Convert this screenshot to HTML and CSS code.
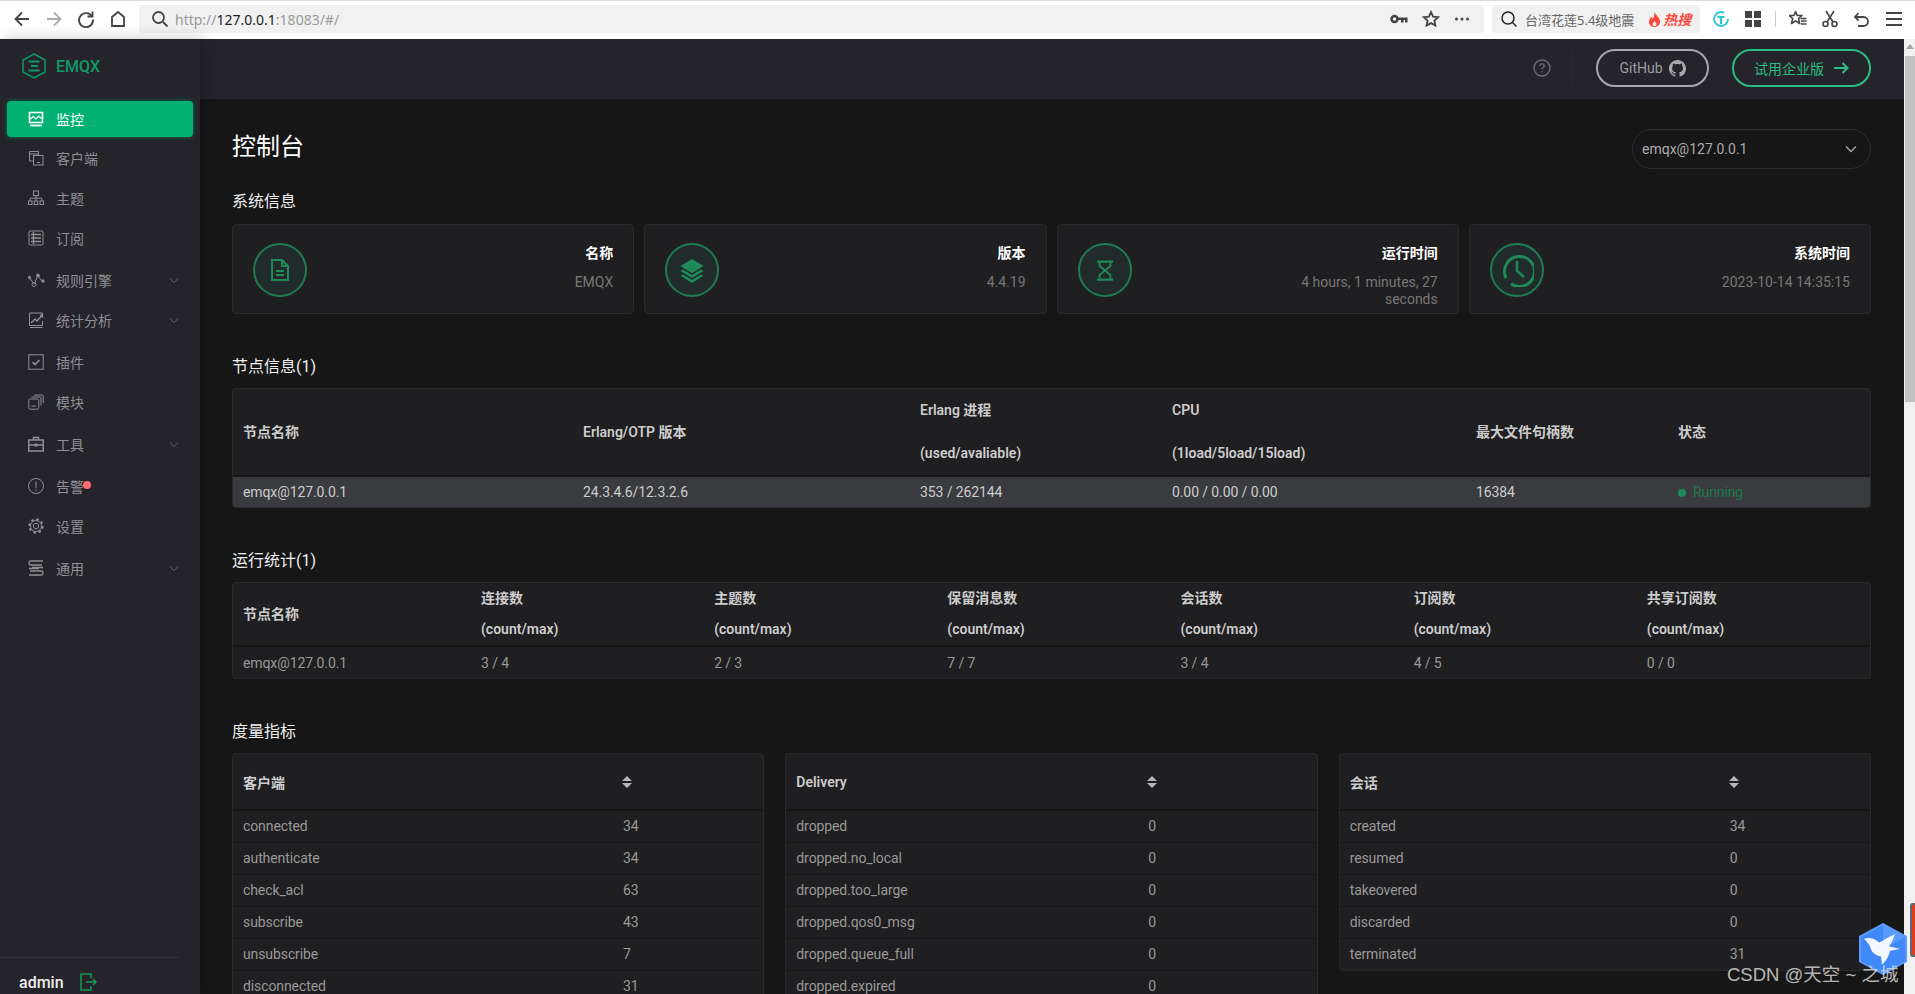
FILE: index.html
```html
<!DOCTYPE html>
<html lang="zh">
<head>
<meta charset="utf-8">
<title>EMQX Dashboard</title>
<link rel="stylesheet" href="styles.css">
</head>
<body>
<header class="browser">
  <button class="bicon"><svg width="20" height="20" viewBox="0 0 20 20" class="bs"><path d="M17 10H4M10 3.500 3.500 10l6.500 6.500"/></svg></button>
  <button class="bicon faded"><svg width="20" height="20" viewBox="0 0 20 20" class="bs"><path d="M3 10h13M10 3.500l6.500 6.500-6.500 6.500"/></svg></button>
  <button class="bicon"><svg width="20" height="20" viewBox="0 0 20 20" class="bs"><path d="M16 7.500A7 7 0 1 0 17 10.500M16.500 2.500v5h-5"/></svg></button>
  <button class="bicon"><svg width="20" height="20" viewBox="0 0 20 20" class="bs"><path d="M4 17V8l6-5 6 5v9z"/></svg></button>
  <div class="address">
    <svg width="18" height="18" viewBox="0 0 18 18" class="bs"><circle cx="7.500" cy="7.500" r="5.500"/><path d="m12 12 4.500 4.500"/></svg>
    <span class="url"><span class="url-dim">http://</span>127.0.0.1<span class="url-dim">:18083/#/</span></span>
    <span class="address-tools">
      <svg width="18" height="14" viewBox="0 0 18 14"><circle cx="4.500" cy="7" r="3" fill="none" stroke="#444" stroke-width="2.500"/><path d="M7 5.500h10.500v5H15V8h-1.500v2.500H11V8H7z" fill="#444"/></svg>
      <svg width="18" height="18" viewBox="0 0 18 18" class="bs"><path d="m9 2 2.100 4.600 5 .6-3.700 3.400 1 5L9 13.100 4.600 15.600l1-5L1.900 7.200l5-.6z"/></svg>
      <svg width="16" height="6" viewBox="0 0 16 6" fill="#444"><circle cx="2.500" cy="3" r="1.500"/><circle cx="8" cy="3" r="1.500"/><circle cx="13.500" cy="3" r="1.500"/></svg>
    </span>
  </div>
  <div class="hotsearch">
    <svg width="18" height="18" viewBox="0 0 18 18" fill="none" stroke="#222" stroke-width="1.500"><circle cx="8" cy="8" r="6"/><path d="m12.500 12.500 4 4"/></svg>
    <span class="hot-text">台湾花莲5.4级地震</span>
    <svg class="flame" width="13" height="15" viewBox="0 0 12 15"><path d="M6 0c1 3 5 5 5.500 9 .3 3-2 6-5.500 6S.2 12.500.5 9.500C.8 7 2 6 2.500 4.500 3.500 5.500 3.800 6 4 7c1.500-2 2-4 2-7zm0 9c-1 1.500-2 2.500-2 3.500S5 14 6 14s2-.5 2-1.500S7 10.500 6 9z" fill="#fb4a3e"/></svg>
    <span class="hot-tag">热搜</span>
  </div>
  <div class="exts">
    <button class="bicon"><svg width="18" height="18" viewBox="0 0 18 18"><circle cx="9" cy="9" r="7" fill="none" stroke="#26c9d2" stroke-width="1.800" stroke-dasharray="36 8"/><path d="M5.500 6h7v2H10v6H8V8H5.500z" fill="#26c9d2"/></svg></button>
    <button class="bicon"><svg width="16" height="16" viewBox="0 0 16 16" fill="#444"><rect x="0" y="0" width="7" height="7"/><rect x="9" y="0" width="7" height="7"/><rect x="0" y="9" width="7" height="7"/><rect x="9" y="9" width="7" height="7"/></svg></button>
    <span class="bdiv"></span>
    <button class="bicon"><svg width="18" height="18" viewBox="0 0 18 18" fill="none" stroke="#444" stroke-width="1.600" stroke-linejoin="round"><path d="M6.500 1.500 8.200 5.500H13L9.500 8.500l1.200 5-4.200-2.700-4 2.700 1.200-5L.5 5.500h4.300z"/><path d="M11.500 8.500h6M12 11h5.500M12 14h5.500"/></svg></button>
    <button class="bicon"><svg width="18" height="18" viewBox="0 0 18 18" fill="none" stroke="#444" stroke-width="1.600"><circle cx="4.500" cy="14" r="2.500"/><circle cx="13.500" cy="14" r="2.500"/><path d="m6 12 7-11M12 12 5 1"/></svg></button>
    <button class="bicon"><svg width="18" height="18" viewBox="0 0 18 18" fill="none" stroke="#444" stroke-width="1.800"><path d="M5 16h5.500a4.500 4.500 0 0 0 0-9H2M5.500 3 2 7l3.500 3.500"/></svg></button>
    <button class="bicon"><svg width="16" height="14" viewBox="0 0 16 14" fill="#444"><rect width="16" height="2"/><rect y="6" width="16" height="2"/><rect y="12" width="16" height="2"/></svg></button>
  </div>
</header>

<div class="app">
  <aside class="sidebar">
    <div class="logo">
      <svg width="24" height="26" viewBox="0 0 24 26" fill="none" stroke="#0f9a68" stroke-width="1.500"><path d="M12 1 23 7v12l-11 6-11-6V7z"/><path d="M6.500 8.500h11M9 13h7M6.500 17.500h11" stroke-width="2"/></svg>
      <span>EMQX</span>
    </div>
    <nav class="menu">
      <a class="item active">
        <svg class="ico" viewBox="0 0 16 16"><rect x="1.500" y="1.500" width="13" height="10" stroke="#fff" stroke-width="1.600"/><path d="M2.500 8 5 5.500l3 2.500 2.500-3 3 2.500" stroke="#fff" stroke-width="1.200"/><path d="M2 14.500h12" stroke-width="1.800"/></svg>
        <span>监控</span>
      </a>
      <a class="item"><svg class="ico" viewBox="0 0 16 16"><path d="M5 11H1.500V1.500h9V5M1.500 4h9"/><rect x="5.500" y="5.500" width="9.500" height="9.500"/><path d="M9 12.500h3"/></svg><span>客户端</span></a>
      <a class="item"><svg class="ico" viewBox="0 0 16 16"><rect x="5.500" y="1" width="5" height="4.500"/><rect x=".5" y="11" width="3.500" height="3.500"/><rect x="6.200" y="11" width="3.500" height="3.500"/><rect x="12" y="11" width="3.500" height="3.500"/><path d="M8 5.500V11M2.200 11V8.200h11.600V11"/></svg><span>主题</span></a>
      <a class="item"><svg class="ico" viewBox="0 0 16 16"><rect x="1" y="1" width="14" height="14" rx="1"/><path d="M3 4.500h10M3 8h10M3 11.500h10M5.500 2v12" stroke-width="1.400"/></svg><span>订阅</span></a>
      <a class="item gap"><svg class="ico" viewBox="0 0 16 16"><path d="M1 5.500 5.500 11l1 1 3-8.500 5 6"/><circle cx="1.500" cy="5.500" r="1.200" fill="currentColor"/><circle cx="6" cy="12.500" r="2"/><circle cx="10" cy="3.500" r="1.400" fill="currentColor"/><circle cx="15" cy="9" r="1.200" fill="currentColor"/></svg><span>规则引擎</span><svg class="chev" viewBox="0 0 12 8"><path d="m1 1.500 5 5 5-5"/></svg></a>
      <a class="item"><svg class="ico" viewBox="0 0 16 16"><path d="M14.500 6V1h-13v12.500h13V9M2 15.500h12.500"/><path d="m3 11 4-4 2 2 4.500-5" stroke-width="1.300"/><circle cx="13.500" cy="3.500" r="1" fill="currentColor"/></svg><span>统计分析</span><svg class="chev" viewBox="0 0 12 8"><path d="m1 1.500 5 5 5-5"/></svg></a>
      <a class="item gap"><svg class="ico" viewBox="0 0 16 16"><rect x=".8" y=".8" width="14.400" height="14.400"/><path d="m4.500 8 2.500 2.500 4.500-4.500" stroke-width="1.600"/></svg><span>插件</span></a>
      <a class="item"><svg class="ico" viewBox="0 0 16 16"><rect x=".8" y="5" width="10" height="10.200" rx="1.500"/><path d="M3.500 12h4.500M3.500 3h8.500a1 1 0 0 1 1 1v7.500M6 1h8a1.200 1.200 0 0 1 1.200 1.200V9"/></svg><span>模块</span></a>
      <a class="item gap"><svg class="ico" viewBox="0 0 16 16"><path d="M5.500 4V1.500h5V4M.8 4h14.400v11H.8zM1 9h14" stroke-width="1.500"/><rect x="6.500" y="7.500" width="3" height="3" fill="currentColor" stroke="none"/></svg><span>工具</span><svg class="chev" viewBox="0 0 12 8"><path d="m1 1.500 5 5 5-5"/></svg></a>
      <a class="item gap"><svg class="ico" viewBox="0 0 16 16"><circle cx="8" cy="8" r="7.500"/><path d="M8 3.500V10M8 11.500V13"/></svg><span class="badged">告警</span></a>
      <a class="item"><svg class="ico" viewBox="0 0 16 16"><circle cx="8" cy="8" r="2.700"/><circle cx="8" cy="8" r="5.500"/><circle cx="8" cy="8" r="6.700" stroke-width="2" stroke-dasharray="2.600 2.660"/></svg><span>设置</span></a>
      <a class="item gap"><svg class="ico" viewBox="0 0 16 16"><path d="M14 5H2.500a1.500 1.500 0 0 1-1.500-1.500v-1A1.500 1.500 0 0 1 2.500 1H15M2 11h11.500a1.500 1.500 0 0 1 1.500 1.500v1a1.500 1.500 0 0 1-1.500 1.500H1M4 7.500h11M1 8.500h10" stroke-width="1.300"/></svg><span>通用</span><svg class="chev" viewBox="0 0 12 8"><path d="m1 1.500 5 5 5-5"/></svg></a>
    </nav>
    <div class="side-foot">
      <span class="admin">admin</span>
      <svg width="17" height="18" viewBox="0 0 17 18" fill="none" stroke="#149a58" stroke-width="1.500"><path d="M11 5V1H1v16h10v-4M6 9h10M13 6l3 3-3 3"/></svg>
    </div>
  </aside>

  <div class="content">
    <div class="topbar">
      <svg class="help" width="18" height="18" viewBox="0 0 18 18" fill="none" stroke="#6d6d72" stroke-width="1.400"><circle cx="9" cy="9" r="8"/><path d="M6.800 7c0-1.300 1-2.100 2.200-2.100s2.200.8 2.200 2c0 1.800-2.200 1.800-2.200 3.400M9 12v1.400"/></svg>
      <span class="vline"></span>
      <a class="pill pill-gray">GitHub <svg width="17" height="17" viewBox="0 0 16 16" fill="#aaa"><path d="M8 0C3.580 0 0 3.580 0 8c0 3.540 2.290 6.530 5.470 7.590.4.070.55-.17.55-.38 0-.19-.01-.82-.01-1.490-2.010.37-2.530-.49-2.690-.94-.09-.23-.48-.94-.82-1.130-.28-.15-.68-.52-.01-.53.63-.01 1.080.58 1.230.82.720 1.210 1.870.87 2.330.66.070-.52.28-.87.51-1.070-1.780-.2-3.640-.89-3.640-3.950 0-.87.31-1.590.82-2.150-.08-.2-.36-1.020.08-2.120 0 0 .67-.21 2.200.82.64-.18 1.320-.27 2-.27.68 0 1.360.09 2 .27 1.530-1.040 2.200-.82 2.200-.82.44 1.100.16 1.920.08 2.120.51.56.82 1.270.82 2.150 0 3.070-1.870 3.750-3.650 3.950.29.25.54.73.54 1.480 0 1.070-.01 1.930-.01 2.200 0 .21.15.46.55.38A8.013 8.013 0 0016 8c0-4.420-3.580-8-8-8z"/></svg></a>
      <a class="pill pill-green">试用企业版 <svg width="15" height="12" viewBox="0 0 15 12" fill="none" stroke="#2bbd82" stroke-width="2"><path d="M0 6h13M8.500 1l5 5-5 5"/></svg></a>
    </div>

    <main class="main">
      <div class="page-head">
        <h1>控制台</h1>
        <div class="select"><span>emqx@127.0.0.1</span><svg width="12" height="8" viewBox="0 0 12 8" fill="none" stroke="#aaa" stroke-width="1.300"><path d="m1 1.500 5 5 5-5"/></svg></div>
      </div>

      <h2 class="first">系统信息</h2>
      <div class="cards">
        <div class="card">
          <span class="round"><svg width="24" height="24" viewBox="0 0 24 24" fill="none" stroke="#1e8a58" stroke-width="2"><path d="M4 2h10l6 6v14H4zM14 2v6h6M8 13h8M8 17h8"/></svg></span>
          <div class="card-text"><strong>名称</strong><p>EMQX</p></div>
        </div>
        <div class="card">
          <span class="round"><svg width="28" height="25" viewBox="0 0 30 28" fill="#1e8a58"><path d="m15 1 13 8-13 8L2 9z"/><path d="M2 14.500 5 13l10 6 10-6 3 1.500-13 8zM2 20l3-1.500 10 6 10-6 3 1.500-13 8z"/></svg></span>
          <div class="card-text"><strong>版本</strong><p>4.4.19</p></div>
        </div>
        <div class="card">
          <span class="round"><svg width="18" height="23" viewBox="0 0 20 24" fill="none" stroke="#1e8a58" stroke-width="2"><path d="M1 2h18M1 22h18" stroke-width="2.500"/><path d="M4 3v4l6 5 6-5V3M4 21v-4l6-5 6 5v4"/></svg></span>
          <div class="card-text"><strong>运行时间</strong><p>4 hours, 1 minutes, 27 seconds</p></div>
        </div>
        <div class="card">
          <span class="round"><svg width="34" height="34" viewBox="0 0 34 34" fill="none" stroke="#1e8a58" stroke-width="3"><path d="M6 25A15 15 0 1 1 11 30.800"/><path d="M17 8v10l7 6" stroke-width="2.500"/></svg></span>
          <div class="card-text"><strong>系统时间</strong><p>2023-10-14 14:35:15</p></div>
        </div>
      </div>

      <h2>节点信息(1)</h2>
      <div class="panel">
        <table class="tbl nodes">
          <colgroup><col class="n1"><col class="n2"><col class="n3"><col class="n4"><col class="n5"><col></colgroup>
          <thead><tr><th>节点名称</th><th>Erlang/OTP 版本</th><th>Erlang 进程<br>(used/avaliable)</th><th>CPU<br>(1load/5load/15load)</th><th>最大文件句柄数</th><th>状态</th></tr></thead>
          <tbody><tr class="hl"><td>emqx@127.0.0.1</td><td>24.3.4.6/12.3.2.6</td><td>353 / 262144</td><td>0.00 / 0.00 / 0.00</td><td>16384</td><td><span class="dot"></span><span class="running">Running</span></td></tr></tbody>
        </table>
      </div>

      <h2>运行统计(1)</h2>
      <div class="panel">
        <table class="tbl stats">
          <colgroup><col class="s1"><col><col><col><col><col><col></colgroup>
          <thead><tr><th>节点名称</th><th>连接数<br>(count/max)</th><th>主题数<br>(count/max)</th><th>保留消息数<br>(count/max)</th><th>会话数<br>(count/max)</th><th>订阅数<br>(count/max)</th><th>共享订阅数<br>(count/max)</th></tr></thead>
          <tbody><tr><td>emqx@127.0.0.1</td><td>3 / 4</td><td>2 / 3</td><td>7 / 7</td><td>3 / 4</td><td>4 / 5</td><td>0 / 0</td></tr></tbody>
        </table>
      </div>

      <h2>度量指标</h2>
      <div class="metrics">
        <div class="panel">
          <table class="tbl metric">
            <colgroup><col class="m-a"><col></colgroup>
            <thead><tr><th>客户端</th><th><svg class="sort" viewBox="0 0 10 12"><path d="M5 0l5 5H0zM5 12 0 7h10z"/></svg></th></tr></thead>
            <tbody>
              <tr><td>connected</td><td>34</td></tr>
              <tr><td>authenticate</td><td>34</td></tr>
              <tr><td>check_acl</td><td>63</td></tr>
              <tr><td>subscribe</td><td>43</td></tr>
              <tr><td>unsubscribe</td><td>7</td></tr>
              <tr><td>disconnected</td><td>31</td></tr>
            </tbody>
          </table>
        </div>
        <div class="panel">
          <table class="tbl metric">
            <colgroup><col class="m-b"><col></colgroup>
            <thead><tr><th>Delivery</th><th><svg class="sort" viewBox="0 0 10 12"><path d="M5 0l5 5H0zM5 12 0 7h10z"/></svg></th></tr></thead>
            <tbody>
              <tr><td>dropped</td><td>0</td></tr>
              <tr><td>dropped.no_local</td><td>0</td></tr>
              <tr><td>dropped.too_large</td><td>0</td></tr>
              <tr><td>dropped.qos0_msg</td><td>0</td></tr>
              <tr><td>dropped.queue_full</td><td>0</td></tr>
              <tr><td>dropped.expired</td><td>0</td></tr>
            </tbody>
          </table>
        </div>
        <div class="panel">
          <table class="tbl metric">
            <colgroup><col class="m-a"><col></colgroup>
            <thead><tr><th>会话</th><th><svg class="sort" viewBox="0 0 10 12"><path d="M5 0l5 5H0zM5 12 0 7h10z"/></svg></th></tr></thead>
            <tbody>
              <tr><td>created</td><td>34</td></tr>
              <tr><td>resumed</td><td>0</td></tr>
              <tr><td>takeovered</td><td>0</td></tr>
              <tr><td>discarded</td><td>0</td></tr>
              <tr><td>terminated</td><td>31</td></tr>
            </tbody>
          </table>
        </div>
      </div>
    </main>
  </div>

  <div class="scrollbar"><span class="arrow"></span><span class="thumb"></span></div>
</div>

<svg class="bird" width="50" height="52" viewBox="0 0 50 56" preserveAspectRatio="none">
  <path d="M25 1 48 14.500v27L25 55 2 41.500v-27z" fill="#4189f8" stroke="#5b9bfa" stroke-width="2" stroke-linejoin="round"/>
  <path d="M25 1 48 14.500 25 28z" fill="#5b9bfa"/>
  <path d="M6 17c6-2 11 0 15 4 4-2 9-6 16-9-2 5-3 9-6 13l11 3-10 2c-1 5-3 10-8 15l-1-9c-6-1-10-5-11-11-2-3-4-6-6-8z" fill="#f3f7ff"/>
</svg>
<div class="thermo"></div>
<div class="watermark">CSDN @天空 ~ 之城</div>
</body>
</html>
```
FILE: styles.css
```css
* { box-sizing: border-box; }
html, body { margin: 0; height: 100%; }
body {
  height: 994px;
  overflow: hidden;
  display: flex;
  flex-direction: column;
  position: relative;
  font-family: Roboto, "Noto Sans CJK SC", sans-serif;
  font-size: 14px;
  background: #161616;
  color: #999;
}

/* browser chrome */
.browser {
  height: 39px;
  flex: none;
  display: flex;
  align-items: center;
  padding: 0 5px 2px 6px;
  background: #fff;
  border-top: 1px solid #dcdcdc;
}
.bicon {
  width: 32px;
  height: 32px;
  flex: none;
  padding: 0;
  border: 0;
  background: none;
  display: flex;
  align-items: center;
  justify-content: center;
}
.faded { opacity: .45; }
.bs { fill: none; stroke: #444; stroke-width: 1.800; }
.address {
  flex: 1;
  height: 28px;
  margin-left: 5px;
  padding: 0 14px 0 12px;
  display: flex;
  align-items: center;
  gap: 6px;
  background: #f1f1f1;
  border-radius: 4px;
}
.url { font-family: "Noto Sans", sans-serif; font-size: 14px; color: #222; }
.url-dim { color: #999; }
.address-tools { margin-left: auto; display: flex; align-items: center; gap: 14px; }
.hotsearch {
  width: 208px;
  height: 28px;
  margin-left: 8px;
  flex: none;
  padding: 0 6px 0 8px;
  display: flex;
  align-items: center;
  background: #f1f1f1;
  border-radius: 4px;
}
.hot-text { margin-left: 7px; font-family: "Noto Sans", "Noto Sans CJK SC", sans-serif; font-size: 13px; color: #666; white-space: nowrap; }
.flame { margin-left: 14px; }
.hot-tag { margin-left: 2px; font-family: "Noto Sans CJK SC", sans-serif; font-size: 14px; font-weight: 700; font-style: italic; color: #fb4a3e; white-space: nowrap; }
.exts { margin-left: 5px; display: flex; align-items: center; }
.bdiv { width: 1px; height: 16px; margin: 0 6px; background: #ccc; }

/* shell */
.app { flex: 1; min-height: 0; display: flex; }
.sidebar {
  width: 200px;
  flex: none;
  display: flex;
  flex-direction: column;
  position: relative;
  z-index: 1;
  background: #24242a;
  box-shadow: 4px 0 14px rgba(0, 0, 0, .22);
}
.logo {
  height: 54px;
  margin-bottom: 5px;
  padding-left: 22px;
  display: flex;
  align-items: center;
  gap: 10px;
  color: #0f9a68;
  font-size: 16px;
  font-weight: 500;
}
.item {
  height: 40px;
  margin: 0 7px;
  padding-left: 21px;
  display: flex;
  align-items: center;
  gap: 12px;
  color: #8f8f94;
  border-radius: 4px;
}
.item.gap { margin-top: 2px; }
.ico {
  width: 16px;
  height: 16px;
  flex: none;
  fill: none;
  stroke: currentColor;
  stroke-width: 1;
  overflow: visible;
}
.chev {
  width: 10px;
  height: 7px;
  margin-left: auto;
  margin-right: 14px;
  fill: none;
  stroke: #66666c;
  stroke-width: 1.200;
}
.active {
  height: 36px;
  margin-top: 3px;
  margin-bottom: 1px;
  background: #00b173;
  color: #fff;
  box-shadow: 0 0 5px rgba(0, 177, 115, .55);
}
.badged { position: relative; }
.badged::after {
  content: "";
  position: absolute;
  top: 5px;
  right: -7px;
  width: 8px;
  height: 8px;
  border-radius: 50%;
  background: #ff6b72;
}
.side-foot {
  margin-top: auto;
  margin-right: 20px;
  height: 37px;
  padding: 15px 0 0 19px;
  display: flex;
  align-items: flex-start;
  gap: 16px;
  border-top: 1px solid #303036;
}
.admin { font-size: 16px; line-height: 20px; font-weight: 500; color: #eee; }

/* top bar */
.content { flex: 1; min-width: 0; display: flex; flex-direction: column; }
.topbar {
  height: 60px;
  flex: none;
  padding: 0 33px 2px 0;
  display: flex;
  align-items: center;
  justify-content: flex-end;
  background: #24242a;
}
.help { margin-right: 21px; }
.vline { width: 1px; height: 34px; margin-right: 23px; background: #2b2b31; }
.pill {
  height: 38px;
  border-radius: 19px;
  border: 2px solid;
  display: flex;
  align-items: center;
  justify-content: center;
  gap: 6px;
}
.pill-gray { width: 113px; color: #9d9da2; border-color: #a8a8ad; }
.pill-green { width: 139px; margin-left: 23px; gap: 10px; color: #2bbd82; border-color: #2bbd82; }

/* main */
.main { flex: 1; min-height: 0; overflow: hidden; padding: 30px 33px 0 32px; }
.page-head { height: 40px; display: flex; justify-content: space-between; align-items: flex-start; }
h1 { margin: 0; font-size: 24px; line-height: 36px; font-weight: 400; color: #fff; }
.select {
  width: 239px;
  height: 40px;
  padding: 0 13px 0 9px;
  display: flex;
  align-items: center;
  justify-content: space-between;
  border: 1px solid #2e2e31;
  border-radius: 20px;
  color: #aaa;
}
h2 {
  margin: 42px 0 10px;
  font-size: 16px;
  line-height: 22px;
  font-weight: 400;
  color: #eee;
}
h2.first { margin-top: 22px; margin-bottom: 11px; }

.cards { display: grid; grid-template-columns: repeat(4, 1fr); gap: 10px; }
.card {
  height: 90px;
  padding: 18px 20px 0 20px;
  display: flex;
  justify-content: space-between;
  background: #1f1e20;
  border: 1px solid #2a2a2c;
  border-radius: 4px;
}
.round {
  width: 54px;
  height: 54px;
  flex: none;
  display: flex;
  align-items: center;
  justify-content: center;
  border: 2px solid #1e7d52;
  border-radius: 50%;
  background: #212b2c;
}
.card-text { width: 170px; margin-top: -1px; text-align: right; }
.card-text strong { display: block; line-height: 22px; font-weight: 700; color: #fff; }
.card-text p { margin: 10px 0 0; line-height: 17px; color: #777; }

.panel {
  background: #1f1e20;
  border: 1px solid #2a2a2c;
  border-radius: 4px;
  overflow: hidden;
  align-self: start;
}
.tbl { width: 100%; table-layout: fixed; border-collapse: collapse; }
.tbl th { padding: 0 10px; text-align: left; font-weight: 600; color: #ccc; border-bottom: 2px solid #161616; }
.tbl td { height: 32px; padding: 0 10px; color: #999; letter-spacing: -.1px; border-bottom: 1px solid #161616; }
.tbl tbody tr:last-child td { border-bottom: 0; }

.nodes th { line-height: 43px; }
.n1 { width: 340px; }
.n2 { width: 337px; }
.n3 { width: 252px; }
.n4 { width: 304px; }
.n5 { width: 202px; }
.hl td { background: #3a3b3f; color: #ccc; height: 31px; }
.dot {
  display: inline-block;
  width: 8px;
  height: 8px;
  margin-right: 7px;
  border-radius: 50%;
  background: #1e8a58;
}
.running { color: #1e7a4e; }

.stats th { line-height: 31px; }
.s1 { width: 238px; }

.metrics { display: grid; grid-template-columns: repeat(3, 1fr); gap: 21px; align-items: start; }
.metric th { height: 56px; }
.m-a { width: 380px; }
.m-b { width: 352px; }
.sort { width: 10px; height: 12px; display: block; margin-left: -1px; fill: #b5b5bb; }

/* scrollbar and overlays */
.scrollbar { width: 11px; flex: none; position: relative; background: #f1f1f1; }
.arrow {
  position: absolute;
  top: 5px;
  left: 2px;
  border: 4px solid transparent;
  border-top: 0;
  border-bottom: 5px solid #a3a3a3;
}
.thumb { position: absolute; top: 17px; left: 1px; right: 0; height: 346px; background: #c1c1c1; }
.bird { position: absolute; left: 1858px; top: 923px; }
.thermo {
  position: absolute;
  left: 1910px;
  top: 903px;
  width: 5px;
  height: 54px;
  background: #e0391a;
  border: 2px solid #5d6b77;
  border-right: 0;
  border-radius: 3px 0 0 3px;
}
.watermark {
  position: absolute;
  left: 1727px;
  top: 962px;
  font-family: "Liberation Sans", "Noto Sans CJK SC", sans-serif;
  font-size: 18.5px;
  line-height: 26px;
  color: rgba(225, 225, 225, .8);
  white-space: nowrap;
}
```
